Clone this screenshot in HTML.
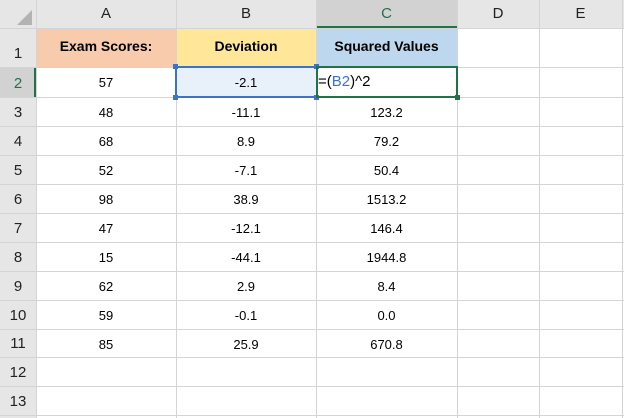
<!DOCTYPE html><html><head><style>
body{margin:0;width:624px;height:418px;overflow:hidden;background:#fff;font-family:"Liberation Sans",sans-serif;position:relative}
div{position:absolute;box-sizing:border-box}
.h{background:#e6e6e6;color:#222;font-size:15px;text-align:center}
.c{font-size:13px;text-align:center;color:#000}
.vl{width:1px;background:#d4d4d4}
.hl{height:1px;background:#d4d4d4}
</style></head><body>
<div class="h" style="left:0;top:0;width:624px;height:28px"></div>
<div class="h" style="left:0;top:0;width:36px;height:418px"></div>
<div style="left:17px;top:10px;width:0;height:0;border-left:15px solid transparent;border-bottom:15px solid #b3b3b3"></div>
<div style="left:316px;top:0;width:141px;height:28px;background:#d2d2d2"></div>
<div style="left:316px;top:26px;width:141px;height:2px;background:#217346"></div>
<div style="left:0;top:67px;width:36px;height:30px;background:#d2d2d2"></div>
<div style="left:34px;top:67px;width:2px;height:30px;background:#217346"></div>
<div style="left:36px;top:28px;width:140px;height:39px;background:#f8cbad"></div>
<div style="left:176px;top:28px;width:140px;height:39px;background:#ffe699"></div>
<div style="left:316px;top:28px;width:141px;height:39px;background:#bdd7ee"></div>
<div style="left:176px;top:67px;width:140px;height:30px;background:#e8f0fa"></div>
<div id="grid"></div>
<script>
var cols=[36,176,316,457,539,622];var rows=[28,67,97,126,155,184,213,242,271,300,329,357,386,415];
var s='';
cols.forEach(function(x){s+='<div class="vl" style="left:'+x+'px;top:0;height:418px"></div>'});
rows.forEach(function(y){s+='<div class="hl" style="left:0;top:'+y+'px;width:624px"></div>'});
var L=['A','B','C','D','E'];
for(var i=0;i<5;i++)s+='<div class="h" style="background:none;left:'+cols[i]+'px;top:5px;width:'+(cols[i+1]-cols[i])+'px;'+(i==2?'color:#217346':'')+'">'+L[i]+'</div>';
for(var r=0;r<13;r++){var t=rows[r],b=rows[r+1]||418;s+='<div class="h" style="background:none;left:0;width:36px;top:'+(b-22)+'px;'+(r==1?'color:#217346':'')+'">'+(r+1)+'</div>';}
var d=[[57,'-2.1',''],[48,'-11.1','123.2'],[68,'8.9','79.2'],[52,'-7.1','50.4'],[98,'38.9','1513.2'],[47,'-12.1','146.4'],[15,'-44.1','1944.8'],[62,'2.9','8.4'],[59,'-0.1','0.0'],[85,'25.9','670.8']];
d.forEach(function(v,k){var t=rows[k+1];for(var j=0;j<3;j++)s+='<div class="c" style="left:'+cols[j]+'px;width:'+(cols[j+1]-cols[j])+'px;top:'+(t+8)+'px">'+v[j]+'</div>';});
document.getElementById('grid').outerHTML=s;
</script>
<div style="left:36px;top:38px;width:140px;text-align:center;font-weight:bold;font-size:14px">Exam Scores:</div>
<div style="left:176px;top:38px;width:140px;text-align:center;font-weight:bold;font-size:14px">Deviation</div>
<div style="left:316px;top:38px;width:141px;text-align:center;font-weight:bold;font-size:14px">Squared Values</div>
<div style="left:175px;top:66px;width:143px;height:32px;border:2px solid #3c73c8"></div>
<div style="left:173px;top:64px;width:5px;height:5px;background:#3c73c8"></div>
<div style="left:314px;top:64px;width:5px;height:5px;background:#3c73c8"></div>
<div style="left:173px;top:95px;width:5px;height:5px;background:#3c73c8"></div>
<div style="left:314px;top:95px;width:5px;height:5px;background:#3c73c8"></div>
<div style="left:316px;top:66px;width:142px;height:32px;border:2px solid #217346"></div>
<div style="left:455px;top:95px;width:5px;height:5px;background:#217346"></div>
<div style="left:318px;top:73px;font-size:15px">=(<span style="color:#3c73c8">B2</span>)^2</div>
</body></html>
